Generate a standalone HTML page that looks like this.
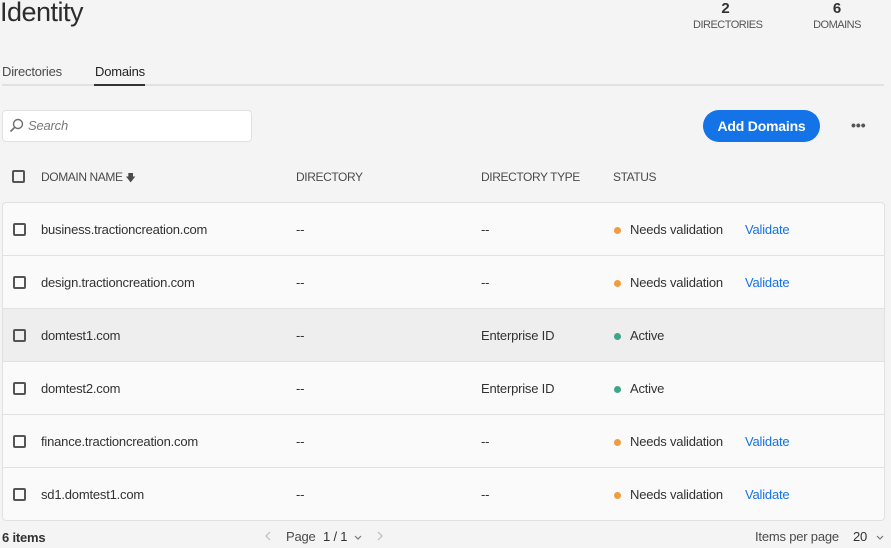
<!DOCTYPE html>
<html><head><meta charset="utf-8"><style>
*{margin:0;padding:0;box-sizing:border-box}
body{width:891px;height:548px;background:#f4f4f4;font-family:"Liberation Sans",sans-serif;color:#323232;position:relative;overflow:hidden;font-size:13px;letter-spacing:-0.2px}
.a{position:absolute;white-space:nowrap}
.cb{position:absolute;width:13px;height:13px;border:2px solid #555;border-radius:2px}
.hdr{font-size:12px;color:#4b4b4b;letter-spacing:-0.4px}
.card{position:absolute;left:2px;top:202px;width:883px;height:319px;background:#fafafa;border:1px solid #e1e1e1;border-radius:4px;overflow:hidden}
.row{position:absolute;left:0;width:883px;height:53px;border-bottom:1px solid #e1e1e1}
.dot{position:absolute;width:7px;height:7px;border-radius:50%}
.val{color:#1473e6}
</style></head><body>
<div class="a" style="left:0;top:-3px;font-size:27px;font-weight:300;color:#2c2c2c;letter-spacing:-0.5px">Identity</div>
<div class="a" style="left:693px;top:0;width:65px;text-align:center;font-weight:bold;font-size:15px">2</div>
<div class="a" style="left:693px;top:19px;width:65px;text-align:center;font-size:11px;color:#555;letter-spacing:-0.5px">DIRECTORIES</div>
<div class="a" style="left:811px;top:0;width:52px;text-align:center;font-weight:bold;font-size:15px">6</div>
<div class="a" style="left:811px;top:19px;width:52px;text-align:center;font-size:11px;color:#555;letter-spacing:-0.5px">DOMAINS</div>
<div class="a" style="left:2px;top:64px;color:#4b4b4b">Directories</div>
<div class="a" style="left:95px;top:64px;color:#222">Domains</div>
<div class="a" style="left:2px;top:84px;width:882px;height:2px;background:#e1e1e1"></div>
<div class="a" style="left:94px;top:84px;width:51px;height:2px;background:#333"></div>
<div class="a" style="left:2px;top:110px;width:250px;height:32px;background:#fff;border:1px solid #e1e1e1;border-radius:4px"></div>
<svg class="a" style="left:9px;top:118px" width="15" height="15" viewBox="0 0 15 15"><circle cx="9" cy="6" r="4.5" fill="none" stroke="#6e6e6e" stroke-width="1.4"/><path d="M5.8 9.2L1.5 13.5" stroke="#6e6e6e" stroke-width="1.6"/></svg>
<div class="a" style="left:28px;top:118px;font-style:italic;color:#7a7a7a">Search</div>
<div class="a" style="left:703px;top:110px;width:117px;height:32px;background:#1473e6;border-radius:16px;color:#fff;font-weight:bold;font-size:14px;text-align:center;line-height:32px">Add Domains</div>
<div class="a" style="left:851px;top:117px;font-size:14px;color:#555;letter-spacing:0px;font-weight:bold">•••</div>
<div class="cb" style="left:12px;top:170px"></div>
<div class="a hdr" style="left:41px;top:170px">DOMAIN NAME <span style="font-size:10px">&#x1F847;</span></div>
<div class="a hdr" style="left:296px;top:170px">DIRECTORY</div>
<div class="a hdr" style="left:481px;top:170px">DIRECTORY TYPE</div>
<div class="a hdr" style="left:613px;top:170px">STATUS</div>
<div class="card">
<div class="row" style="top:0"><div class="cb" style="left:10px;top:20px"></div><div class="a" style="left:38px;top:19px">business.tractioncreation.com</div><div class="a" style="left:293px;top:19px">--</div><div class="a" style="left:478px;top:19px">--</div><div class="dot" style="left:611px;top:24px;background:#f29b41"></div><div class="a" style="left:627px;top:19px">Needs validation</div><div class="a val" style="left:742px;top:19px">Validate</div></div>
<div class="row" style="top:53px"><div class="cb" style="left:10px;top:20px"></div><div class="a" style="left:38px;top:19px">design.tractioncreation.com</div><div class="a" style="left:293px;top:19px">--</div><div class="a" style="left:478px;top:19px">--</div><div class="dot" style="left:611px;top:24px;background:#f29b41"></div><div class="a" style="left:627px;top:19px">Needs validation</div><div class="a val" style="left:742px;top:19px">Validate</div></div>
<div class="row" style="top:106px;background:#eeeeee"><div class="cb" style="left:10px;top:20px"></div><div class="a" style="left:38px;top:19px">domtest1.com</div><div class="a" style="left:293px;top:19px">--</div><div class="a" style="left:478px;top:19px">Enterprise ID</div><div class="dot" style="left:611px;top:24px;background:#3da58a"></div><div class="a" style="left:627px;top:19px">Active</div></div>
<div class="row" style="top:159px"><div class="cb" style="left:10px;top:20px"></div><div class="a" style="left:38px;top:19px">domtest2.com</div><div class="a" style="left:293px;top:19px">--</div><div class="a" style="left:478px;top:19px">Enterprise ID</div><div class="dot" style="left:611px;top:24px;background:#3da58a"></div><div class="a" style="left:627px;top:19px">Active</div></div>
<div class="row" style="top:212px"><div class="cb" style="left:10px;top:20px"></div><div class="a" style="left:38px;top:19px">finance.tractioncreation.com</div><div class="a" style="left:293px;top:19px">--</div><div class="a" style="left:478px;top:19px">--</div><div class="dot" style="left:611px;top:24px;background:#f29b41"></div><div class="a" style="left:627px;top:19px">Needs validation</div><div class="a val" style="left:742px;top:19px">Validate</div></div>
<div class="row" style="top:265px;border-bottom:none"><div class="cb" style="left:10px;top:20px"></div><div class="a" style="left:38px;top:19px">sd1.domtest1.com</div><div class="a" style="left:293px;top:19px">--</div><div class="a" style="left:478px;top:19px">--</div><div class="dot" style="left:611px;top:24px;background:#f29b41"></div><div class="a" style="left:627px;top:19px">Needs validation</div><div class="a val" style="left:742px;top:19px">Validate</div></div>
</div>
<div class="a" style="left:2px;top:530px;font-weight:bold">6 items</div>
<svg class="a" style="left:265px;top:531px" width="6" height="10" viewBox="0 0 6 10"><path d="M5 1L1 5L5 9" fill="none" stroke="#bbb" stroke-width="1.2"/></svg>
<div class="a" style="left:286px;top:529px;color:#4b4b4b">Page</div>
<div class="a" style="left:323px;top:529px;color:#323232">1 / 1</div>
<svg class="a" style="left:354px;top:535px" width="8" height="5" viewBox="0 0 8 5"><path d="M1 1L4 4L7 1" fill="none" stroke="#777" stroke-width="1.2"/></svg>
<svg class="a" style="left:377px;top:531px" width="6" height="10" viewBox="0 0 6 10"><path d="M1 1L5 5L1 9" fill="none" stroke="#bbb" stroke-width="1.2"/></svg>
<div class="a" style="left:755px;top:529px;color:#4b4b4b">Items per page</div>
<div class="a" style="left:853px;top:529px">20</div>
<svg class="a" style="left:876px;top:535px" width="8" height="5" viewBox="0 0 8 5"><path d="M1 1L4 4L7 1" fill="none" stroke="#777" stroke-width="1.2"/></svg>
</body></html>
